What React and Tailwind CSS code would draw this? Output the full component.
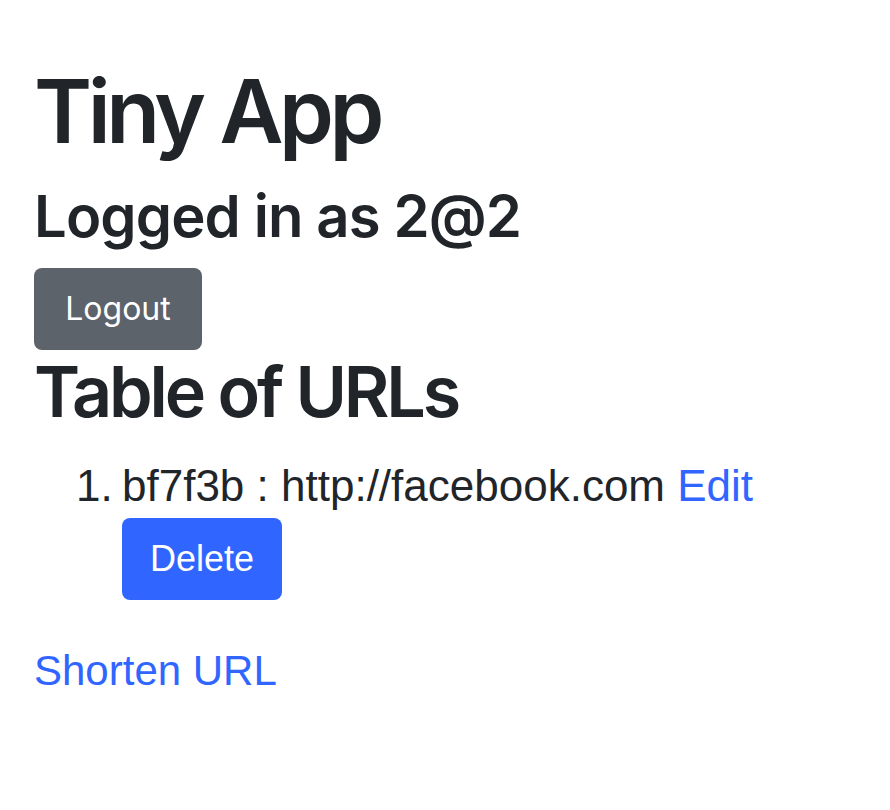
export default function App() {
    const urls = [{ id: 'bf7f3b', longURL: 'http://facebook.com' }];

    return (
        <div className="min-h-[810px] bg-white px-[34px] pt-[67px] text-[#212529] font-['Inter',sans-serif]">
            <h1 className="text-[88px] leading-none font-semibold tracking-[-0.05em]">Tiny App</h1>
            <h3 className="mt-[32px] text-[58px] leading-none font-semibold tracking-[-0.015em]">Logged in as 2@2</h3>

            <button
                type="button"
                className="mt-[23px] flex h-[82px] w-[168px] items-center justify-center rounded-[8px] bg-[#5c636a] text-[32px] text-white"
            >
                Logout
            </button>

            <h2 className="mt-[7px] text-[70px] leading-none font-semibold tracking-[-0.045em]">Table of URLs</h2>

            <ol className="mt-[37px] pl-[42px] font-['Liberation_Sans',sans-serif] text-[44px] leading-none">
                {urls.map((url, i) => (
                    <li key={url.id} className="flex">
                        <span className="w-[46px] shrink-0">{i + 1}.</span>
                        <div>
                            <span>{url.id} : {url.longURL} </span>
                            <a href="#" className="text-[#3165ff]">Edit</a>
                            <form className="mt-[10px]">
                                <button
                                    type="button"
                                    className="flex h-[82px] w-[160px] items-center justify-center rounded-[8px] bg-[#3165ff] text-[36px] text-white"
                                >
                                    Delete
                                </button>
                            </form>
                        </div>
                    </li>
                ))}
            </ol>

            <a href="#" className="mt-[50px] block font-['Liberation_Sans',sans-serif] text-[42px] leading-none text-[#3165ff]">
                Shorten URL
            </a>
        </div>
    );
}
